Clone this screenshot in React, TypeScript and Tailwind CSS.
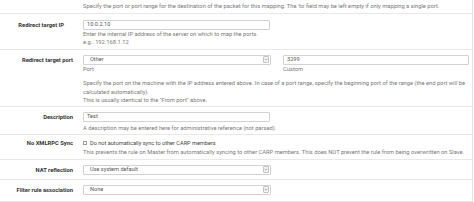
import React from 'react';

const font = { fontFamily: 'Roboto, "Liberation Sans", sans-serif' };

function Arrow() {
  return (
    <span className="flex h-[7px] w-[6px] items-center justify-center rounded-[1px] border border-[#c4c4c4] bg-[#f4f4f4]">
      <svg viewBox="0 0 6 4" className="h-[3px] w-[4px]">
        <path d="M1 1 L3 3 L5 1" fill="none" stroke="#777" strokeWidth="0.9" />
      </svg>
    </span>
  );
}

function TextBox({ value, w = 'w-[187px]' }: { value: string; w?: string }) {
  return (
    <div className={`flex h-[10px] ${w} items-center rounded-[1px] border border-[#d2d2d2] pl-[3px] text-[5.6px] text-[#555]`}>
      {value}
    </div>
  );
}

function Select({ value }: { value: string }) {
  return (
    <div className="flex h-[10px] w-[188px] items-center justify-between rounded-[1px] border border-[#d2d2d2] pl-[6px] pr-[1px] text-[5.6px] text-[#555]">
      <span>{value}</span>
      <Arrow />
    </div>
  );
}

function Help({ children }: { children: React.ReactNode }) {
  return <div className="whitespace-nowrap text-[5.75px] leading-[8.5px] text-[#7a7a7a]">{children}</div>;
}

function Row({
  label,
  pt,
  pb,
  labelPr = 0,
  children,
}: {
  label?: string;
  pt: string;
  pb: string;
  labelPr?: number;
  children: React.ReactNode;
}) {
  return (
    <div className={`flex border-b border-[#e8e8e8] ${pt} ${pb}`}>
      <div
        className={`w-[73px] shrink-0 text-right text-[5.8px] font-bold leading-[10px] text-[#333] ${
          labelPr ? 'pr-[9px]' : ''
        }`}
      >
        {label}
      </div>
      <div className="ml-[10px] flex w-[386px] flex-col">{children}</div>
    </div>
  );
}

export default function App() {
  return (
    <div className="h-[202px] w-[474px] overflow-hidden bg-white" style={font}>
      <div className="w-[473px] border-r border-[#e3e3e3]">
        <Row pt="pt-[2px]" pb="pb-[2px]">
          <Help>
            Specify the port or port range for the destination of the packet for this mapping. The 'to' field may be
            left empty if only mapping a single port.
          </Help>
        </Row>

        <Row label="Redirect target IP" pt="pt-[6px]" pb="pb-[2px]" labelPr={1}>
          <TextBox value="10.0.2.10" />
          <Help>
            Enter the internal IP address of the server on which to map the ports.
            <br />
            e.g.: 192.168.1.12
          </Help>
        </Row>

        <Row label="Redirect target port" pt="pt-[5px]" pb="pb-[1px]">
          <div className="flex gap-[12px]">
            <div className="flex flex-col">
              <Select value="Other" />
              <Help>Port</Help>
            </div>
            <div className="flex flex-col">
              <TextBox value="3299" w="w-[186px]" />
              <Help>Custom</Help>
            </div>
          </div>
          <div className="mt-[6px]">
            <Help>
              Specify the port on the machine with the IP address entered above. In case of a port range, specify the
              beginning port of the range (the end port will be
              <br />
              calculated automatically).
              <br />
              This is usually identical to the "From port" above.
            </Help>
          </div>
        </Row>

        <Row label="Description" pt="pt-[5px]" pb="pb-[2px]">
          <TextBox value="Test" />
          <div className="mt-[2px]">
            <Help>A description may be entered here for administrative reference (not parsed).</Help>
          </div>
        </Row>

        <Row label="No XMLRPC Sync" pt="pt-[3px]" pb="pb-[2px]">
          <div className="flex h-[10px] items-center gap-[3px] text-[5.6px] text-[#444]">
            <span className="h-[4px] w-[4px] rounded-[0.5px] border border-[#999] bg-white" />
            Do not automatically sync to other CARP members
          </div>
          <Help>
            This prevents the rule on Master from automatically syncing to other CARP members. This does NOT prevent the
            rule from being overwritten on Slave.
          </Help>
        </Row>

        <Row label="NAT reflection" pt="pt-[5px]" pb="pb-[4px]">
          <Select value="Use system default" />
        </Row>

        <Row label="Filter rule association" pt="pt-[5px]" pb="pb-[6px]">
          <Select value="None" />
        </Row>
      </div>
    </div>
  );
}
